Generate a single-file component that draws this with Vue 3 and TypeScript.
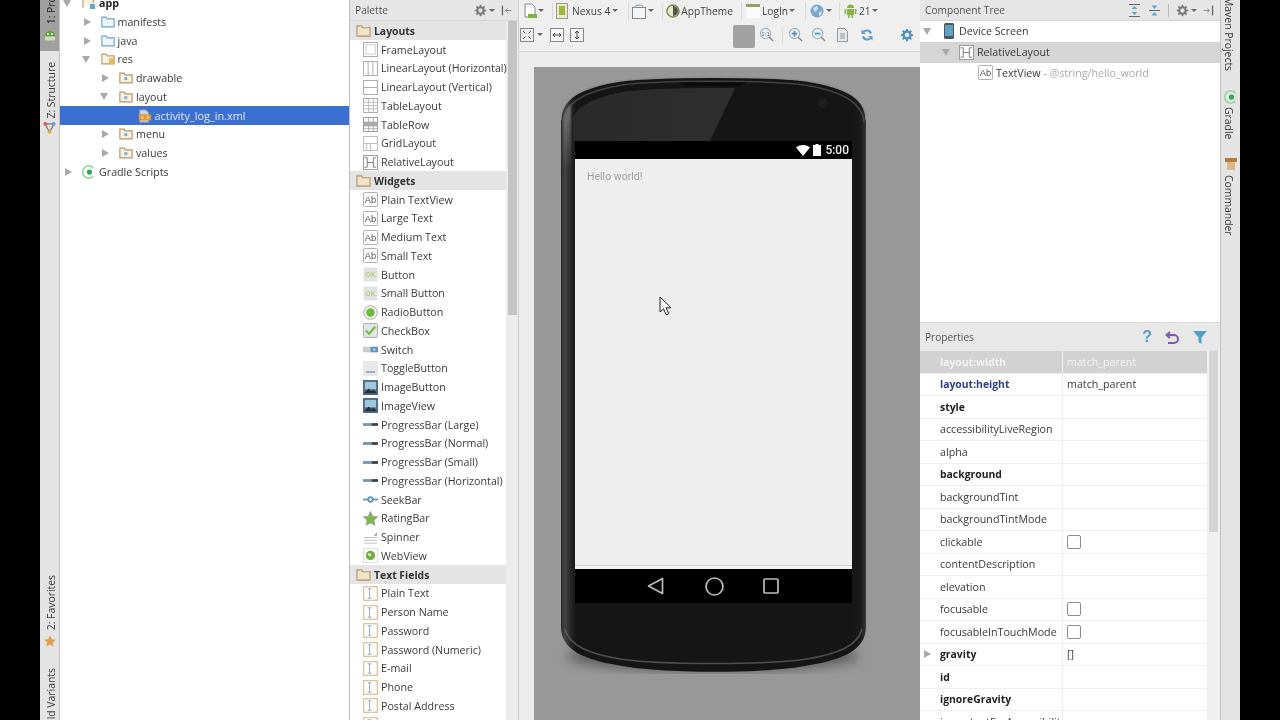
<script setup lang="ts">
type Row = { label: string; icon: string; head?: boolean }

const treeRows = [
  { label: "app", icon: "module", level: 0, open: true, bold: true },
  { label: "manifests", icon: "folder-blue", level: 1, open: false },
  { label: "java", icon: "folder-blue", level: 1, open: false },
  { label: "res", icon: "folder-res", level: 1, open: true },
  { label: "drawable", icon: "folder-pkg", level: 2, open: false },
  { label: "layout", icon: "folder-pkg", level: 2, open: true },
  { label: "activity_log_in.xml", icon: "xml", level: 3, selected: true },
  { label: "menu", icon: "folder-pkg", level: 2, open: false },
  { label: "values", icon: "folder-pkg", level: 2, open: false },
  { label: "Gradle Scripts", icon: "gradle", level: 0, open: false },
]

const paletteRows: Row[] = [
  { label: "Layouts", icon: "folder", head: true },
  { label: "FrameLayout", icon: "frame" },
  { label: "LinearLayout (Horizontal)", icon: "linh" },
  { label: "LinearLayout (Vertical)", icon: "linv" },
  { label: "TableLayout", icon: "table" },
  { label: "TableRow", icon: "tablerow" },
  { label: "GridLayout", icon: "grid" },
  { label: "RelativeLayout", icon: "relative" },
  { label: "Widgets", icon: "folder", head: true },
  { label: "Plain TextView", icon: "ab" },
  { label: "Large Text", icon: "ab" },
  { label: "Medium Text", icon: "ab" },
  { label: "Small Text", icon: "ab" },
  { label: "Button", icon: "ok" },
  { label: "Small Button", icon: "ok" },
  { label: "RadioButton", icon: "radio" },
  { label: "CheckBox", icon: "check" },
  { label: "Switch", icon: "switch" },
  { label: "ToggleButton", icon: "toggle" },
  { label: "ImageButton", icon: "image" },
  { label: "ImageView", icon: "image" },
  { label: "ProgressBar (Large)", icon: "bar" },
  { label: "ProgressBar (Normal)", icon: "bar" },
  { label: "ProgressBar (Small)", icon: "bar" },
  { label: "ProgressBar (Horizontal)", icon: "bar" },
  { label: "SeekBar", icon: "seek" },
  { label: "RatingBar", icon: "star" },
  { label: "Spinner", icon: "spinner" },
  { label: "WebView", icon: "web" },
  { label: "Text Fields", icon: "folder", head: true },
  { label: "Plain Text", icon: "field" },
  { label: "Person Name", icon: "field" },
  { label: "Password", icon: "field" },
  { label: "Password (Numeric)", icon: "field" },
  { label: "E-mail", icon: "field" },
  { label: "Phone", icon: "field" },
  { label: "Postal Address", icon: "field" },
  { label: "Multiline Text", icon: "field" },
]

const props = [
  { name: "layout:width", value: "match_parent", kind: "selected" },
  { name: "layout:height", value: "match_parent", kind: "blue" },
  { name: "style", kind: "strong" },
  { name: "accessibilityLiveRegion" },
  { name: "alpha" },
  { name: "background", kind: "strong" },
  { name: "backgroundTint" },
  { name: "backgroundTintMode" },
  { name: "clickable", check: true },
  { name: "contentDescription" },
  { name: "elevation" },
  { name: "focusable", check: true },
  { name: "focusableInTouchMode", check: true },
  { name: "gravity", value: "[]", kind: "strong", arrow: true },
  { name: "id", kind: "strong" },
  { name: "ignoreGravity", kind: "strong" },
  { name: "importantForAccessibility" },
]
</script>

<template>
  <div class="screen-root">
    <svg class="defs" width="0" height="0">
      <defs>
        <symbol id="folder" viewBox="0 0 16 16"><path d="M1 3h5l1 2h8v9H1z" fill="#f0e3c8" stroke="#b09468" stroke-width="1.2" /></symbol>
        <symbol id="folder-blue" viewBox="0 0 16 16"><path d="M1 2.500h5l1 2h8v9H1z" fill="#eef6fa" stroke="#6aa5c4" stroke-width="1.3" /></symbol>
        <symbol id="folder-res" viewBox="0 0 16 16"><path d="M1 2.500h5l1 2h8v9H1z" fill="#f8f2e4" stroke="#b89c6c" stroke-width="1.3" /><rect x="9" y="7" width="6" height="7" fill="#e2bd58" /></symbol>
        <symbol id="folder-pkg" viewBox="0 0 16 16"><path d="M1 2.500h5l1 2h8v9H1z" fill="#f8f2e4" stroke="#b09468" stroke-width="1.3" /><rect x="6" y="7" width="3.500" height="3.500" fill="#7fb2cf" /></symbol>
        <symbol id="module" viewBox="0 0 16 16"><path d="M1 13V2h5l1 2h6v4" fill="#f8f2e4" stroke="#b89c6c" stroke-width="1.3" /><rect x="9" y="9" width="6" height="6" fill="#6aa5c9" /></symbol>
        <symbol id="xml" viewBox="0 0 16 16"><path d="M2 1h7l3 3v11H2z" fill="#ccd3e4" stroke="#8d9ab6" /><rect x="1" y="6" width="14" height="7" rx="1" fill="#e29a32" /><path d="M6 8l-2 1.500 2 1.500M10 8l2 1.500-2 1.500" fill="none" stroke="#fff" /></symbol>
        <symbol id="gradle" viewBox="0 0 16 16"><path d="M13 3.500A7 7 0 1 0 13 12.500" fill="none" stroke="#9cd6a2" stroke-width="2" /><circle cx="8.500" cy="8" r="3" fill="#2fa84f" /></symbol>
        <symbol id="frame" viewBox="0 0 16 16"><rect x=".5" y=".5" width="15" height="15" fill="#fff" stroke="#aaa" /><rect x="3" y="3" width="10" height="10" fill="none" stroke="#ccc" /></symbol>
        <symbol id="linh" viewBox="0 0 16 16"><rect x=".5" y=".5" width="15" height="15" fill="#fff" stroke="#aaa" /><path d="M5.500 1v14M10.500 1v14" stroke="#aaa" /></symbol>
        <symbol id="linv" viewBox="0 0 16 16"><rect x=".5" y=".5" width="15" height="15" fill="#fff" stroke="#aaa" /><path d="M1 8h14" stroke="#aaa" /></symbol>
        <symbol id="table" viewBox="0 0 16 16"><rect x=".5" y=".5" width="15" height="15" fill="#fff" stroke="#aaa" /><path d="M1 4.500h14M1 8h14M1 11.500h14M6 1v14M11 1v14" stroke="#bbb" /></symbol>
        <symbol id="tablerow" viewBox="0 0 16 16"><rect x=".5" y=".5" width="15" height="15" fill="#fff" stroke="#999" /><rect x="1" y="5" width="14" height="5" fill="#aaa" /><path d="M1 12.500h14M6 1v14M11 1v14" stroke="#aaa" /></symbol>
        <symbol id="grid" viewBox="0 0 16 16"><rect x=".5" y=".5" width="15" height="15" fill="#fff" stroke="#bbb" /><path d="M1 8h14M8 8v7M4 8v7" stroke="#bbb" /></symbol>
        <symbol id="relative" viewBox="0 0 16 16"><rect x=".5" y=".5" width="15" height="15" fill="#fff" stroke="#999" /><path d="M1.500 3h3v10h-3M14 3h-3v10h3M4.500 8H11" fill="none" stroke="#777" /></symbol>
        <symbol id="ab" viewBox="0 0 16 16"><rect x=".5" y=".5" width="15" height="15" rx="1" fill="#fff" stroke="#aaa" /><text x="8" y="11.500" text-anchor="middle" font-size="10" font-family="Liberation Sans" fill="#555">Ab</text></symbol>
        <symbol id="ok" viewBox="0 0 16 16"><rect x=".5" y=".5" width="15" height="15" rx="1" fill="#e2e2e2" /><text x="8" y="11" text-anchor="middle" font-size="7.500" font-weight="700" font-family="Liberation Sans" fill="#b4d080">OK</text></symbol>
        <symbol id="radio" viewBox="0 0 16 16"><circle cx="8" cy="8" r="7.300" fill="#eee" stroke="#aaa" /><circle cx="8" cy="8" r="4.500" fill="#6dbb3a" /></symbol>
        <symbol id="check" viewBox="0 0 16 16"><rect x=".5" y=".5" width="15" height="15" rx="1" fill="#e4e4e4" stroke="#aaa" /><path d="M3 8l3.500 3.500L13 4" fill="none" stroke="#6dbb3a" stroke-width="2.200" /></symbol>
        <symbol id="switch" viewBox="0 0 16 16"><rect y="5" width="10" height="6" fill="#ccc" /><rect x="8" y="5" width="8" height="6" fill="#5f95c4" /><rect x="11" y="7" width="2" height="2" fill="#dfeaf3" /></symbol>
        <symbol id="toggle" viewBox="0 0 16 16"><rect width="16" height="16" fill="#e8e8e8" /><rect x="3" y="11" width="10" height="1.500" fill="#7a95b0" /></symbol>
        <symbol id="image" viewBox="0 0 16 16"><rect width="16" height="16" fill="#4e6a86" /><rect x="2" y="2" width="12" height="8" fill="#9fc7e0" /><path d="M1 14l5-5 3 3 2-2 4 4z" fill="#26323c" /></symbol>
        <symbol id="bar" viewBox="0 0 16 16"><rect y="6.500" width="9" height="3" fill="#7096b8" /><rect x="9" y="6.500" width="7" height="3" fill="#444" /></symbol>
        <symbol id="seek" viewBox="0 0 16 16"><rect y="7" width="16" height="2" fill="#7096b8" /><circle cx="8" cy="8" r="3.500" fill="#6a98bd" /><circle cx="8" cy="8" r="1.300" fill="#fff" /></symbol>
        <symbol id="star" viewBox="0 0 16 16"><path d="M8 .5l2.300 5 5.400.7-4 3.700 1.100 5.400L8 12.700l-4.800 2.600 1.100-5.400-4-3.700 5.400-.7z" fill="#79b84a" stroke="#a6a6a6" /></symbol>
        <symbol id="spinner" viewBox="0 0 16 16"><path d="M1 8h14M1 11h14M1 14h14" stroke="#bbb" /><path d="M15 2v4h-4z" fill="#aaa" /></symbol>
        <symbol id="web" viewBox="0 0 16 16"><rect x=".5" y=".5" width="15" height="15" fill="#fff" stroke="#ddd" /><circle cx="8" cy="8" r="5" fill="#6fae3e" /><circle cx="7" cy="7" r="1.800" fill="#d6e8c2" /></symbol>
        <symbol id="field" viewBox="0 0 16 16"><rect x=".7" y=".7" width="14.600" height="14.600" fill="#fff" stroke="#e0c49c" stroke-width="1.400" /><path d="M5 3h4M5 13h4M7 3v10" fill="none" stroke="#8fa8c0" /></symbol>
        <symbol id="gear" viewBox="0 0 16 16"><circle cx="8" cy="8" r="4" fill="none" stroke="currentColor" stroke-width="2.600" /><path d="M8 1v3M8 12v3M1 8h3M12 8h3M3 3l2 2M11 11l2 2M13 3l-2 2M5 11l-2 2" stroke="currentColor" stroke-width="2" /></symbol>
        <symbol id="pin" viewBox="0 0 16 16"><path d="M3 2v12" stroke="#666" stroke-width="1.600" /><path d="M14 8H7M9.500 5.500L7 8l2.500 2.500" fill="none" stroke="#777" /></symbol>
        <symbol id="pin-r" viewBox="0 0 16 16"><path d="M13 2v12" stroke="#666" stroke-width="1.600" /><path d="M2 8h7M6.500 5.500L9 8l-2.500 2.500" fill="none" stroke="#777" /></symbol>
        <symbol id="magnify" viewBox="0 0 16 16"><circle cx="7" cy="7" r="5.500" fill="#e7eef2" stroke="#9fb1bd" stroke-width="1.200" /><path d="M11 11l4 4" stroke="#8a8a8a" stroke-width="1.500" /></symbol>
      </defs>
    </svg>

    <div class="bar-black"></div>

    <aside class="stripe stripe-left">
      <div class="stripe-active">
        <span class="vtext up project">1: Project</span>
        <svg class="stripe-icon droid" width="12" height="11" viewBox="0 0 12 11"><path d="M1 6a5 5 0 0 1 10 0z" fill="#5f9e3a" /><rect x="1" y="6.500" width="10" height="4" rx="1" fill="#cfe0b8" /><circle cx="4" cy="4" r=".9" fill="#fff" /><circle cx="8" cy="4" r=".9" fill="#fff" /></svg>
      </div>
      <span class="vtext up structure">Z: Structure</span>
      <svg class="stripe-icon tree-glyph" width="13" height="13" viewBox="0 0 14 14"><path d="M2 3l5 9 5-9z" fill="none" stroke="#777" stroke-width="1.300" /><circle cx="2.500" cy="3" r="2" fill="#d9534f" /><circle cx="11.500" cy="3" r="2" fill="#5a9bd4" /><circle cx="7" cy="11.500" r="2" fill="#e6a13c" /></svg>
      <div class="grow"></div>
      <span class="vtext up">2: Favorites</span>
      <svg class="stripe-icon star" width="12" height="12" viewBox="0 0 16 16"><path d="M8 .5l2.300 5 5.400.7-4 3.700 1.100 5.400L8 12.700l-4.800 2.600 1.100-5.400-4-3.700 5.400-.7z" fill="#e0a04a" /></svg>
      <span class="vtext up variants">Build Variants</span>
    </aside>

    <section class="tree">
      <div
        v-for="row in treeRows"
        :key="row.label"
        class="tree-row"
        :class="{ 'tree-selected': row.selected }"
        :style="{ paddingLeft: 3 + row.level * 18.500 + 'px' }"
      >
        <span class="arrow-slot">
          <i v-if="row.open === true" class="tri-down"></i>
          <i v-else-if="row.open === false" class="tri-right"></i>
        </span>
        <svg class="tree-icon" width="14" height="14"><use :href="'#' + row.icon" /></svg>
        <span :class="{ bold: row.bold }">{{ row.label }}</span>
      </div>
    </section>

    <section class="palette">
      <header class="panel-head">
        <span>Palette</span>
        <span class="head-tools">
          <svg class="gear" width="13" height="13"><use href="#gear" /></svg>
          <i class="mini-down"></i>
          <svg class="pin-gap" width="13" height="13"><use href="#pin" /></svg>
        </span>
      </header>
      <div class="palette-body">
        <div class="palette-list">
          <template v-for="row in paletteRows" :key="row.label">
            <div v-if="row.head" class="pal-head">
              <svg width="15" height="15"><use :href="'#' + row.icon" /></svg>
              <span>{{ row.label }}</span>
            </div>
            <div v-else class="pal-row">
              <svg width="15" height="15"><use :href="'#' + row.icon" /></svg>
              <span>{{ row.label }}</span>
            </div>
          </template>
        </div>
        <div class="pal-track"><div class="pal-thumb"></div></div>
      </div>
    </section>

    <section class="designer">
      <div class="toolbar">
        <div class="tb-row tb-top">
          <svg width="15" height="16" viewBox="0 0 15 16"><path d="M2 1h7l3 3v10H2z" fill="#fff" stroke="#888" /><rect x="5" y="11" width="9" height="4" fill="#7cb342" /></svg>
          <i class="mini-down m0"></i>
          <b class="tb-div d1"></b>
          <svg width="12" height="16" viewBox="0 0 12 16"><rect x=".5" y=".5" width="11" height="15" fill="#f0e8c8" stroke="#999" /><rect x="3" y="3" width="6" height="9" fill="#9ab83e" /></svg>
          <span class="tb-text t-nexus">Nexus 4</span><i class="mini-down m2"></i>
          <b class="tb-div d2"></b>
          <svg width="14" height="16" viewBox="0 0 14 16"><rect x=".5" y="4.500" width="13" height="11" fill="#f4f4f4" stroke="#888" /><path d="M2 5C3 1 11 1 12 5" fill="none" stroke="#6f9fc0" /></svg>
          <i class="mini-down m2"></i>
          <b class="tb-div d3"></b>
          <svg width="14" height="14" viewBox="0 0 14 14"><circle cx="7" cy="7" r="6" fill="#e6e8c8" stroke="#7d8b4a" stroke-width="1.500" /><path d="M7 2a5 5 0 0 1 0 10z" fill="#555" /></svg>
          <span class="tb-text t-theme">AppTheme</span>
          <b class="tb-div d4"></b>
          <svg width="14" height="16" viewBox="0 0 14 16"><rect y="1" width="14" height="3" fill="#8fa35a" /><rect y="4" width="14" height="11" fill="#fafafa" /></svg>
          <span class="tb-text t-login">LogIn</span><i class="mini-down m1"></i>
          <b class="tb-div d5"></b>
          <svg class="globe" width="14" height="14" viewBox="0 0 14 14"><circle cx="7" cy="7" r="6.500" fill="#7ba7cf" /><path d="M3 4l4-2 1 3-3 3zM9 8l3-1-1 4-2 1z" fill="#d5e2ee" /></svg>
          <i class="mini-down m2"></i>
          <b class="tb-div d6"></b>
          <svg width="13" height="16" viewBox="0 0 12 16"><path d="M2.500 5a3.500 3.500 0 0 1 7 0zM2.500 6h7v6h-1v3h-1.500v-3h-2v3H3.500v-3h-1zM0 6h1.700v5H0zM10.300 6H12v5h-1.700z" fill="#8ab04a" /></svg>
          <span class="tb-text t-api">21</span><i class="mini-down m1"></i>
        </div>
        <div class="tb-row tb-bottom">
          <svg width="14" height="14" viewBox="0 0 14 14"><rect x=".5" y=".5" width="13" height="13" fill="#eee" stroke="#888" /><path d="M3 3l2.500 2.500M11 3L8.500 5.500M3 11l2.500-2.500M11 11L8.500 8.500" stroke="#555" /></svg>
          <i class="mini-down m3"></i>
          <svg class="fit1" width="14" height="14" viewBox="0 0 14 14"><rect x=".5" y=".5" width="13" height="13" fill="#f5f5f5" stroke="#888" /><path d="M3 7h8M5 5L3 7l2 2M9 5l2 2-2 2" fill="none" stroke="#444" /></svg>
          <svg class="fit2" width="14" height="14" viewBox="0 0 14 14"><rect x=".5" y=".5" width="13" height="13" fill="#f5f5f5" stroke="#888" /><path d="M7 3v8M5 5l2-2 2 2M5 9l2 2 2-2" fill="none" stroke="#444" /></svg>
          <div class="grow"></div>
          <span class="toggled"></span>
          <span class="zoom-one">
            <svg width="15" height="15" viewBox="0 0 16 16"><use href="#magnify" /><text x="7" y="9.500" text-anchor="middle" font-size="6.500" font-family="Liberation Sans" fill="#667">1:1</text></svg>
          </span>
          <b class="tb-div d7"></b>
          <svg class="zoom-in" width="15" height="15" viewBox="0 0 16 16"><use href="#magnify" /><path d="M4 7h6M7 4v6" stroke="#5d8fb0" stroke-width="1.800" /></svg>
          <svg class="zoom-out" width="15" height="15" viewBox="0 0 16 16"><use href="#magnify" /><path d="M4 7h6" stroke="#5d8fb0" stroke-width="1.800" /></svg>
          <svg class="doc" width="11" height="14" viewBox="0 0 11 14"><path d="M.5.5h7l3 3v10H.500z" fill="#e8e8e8" stroke="#8e9ba4" /><path d="M3 6h5M3 8h5M3 10h5" stroke="#8e9ba4" /></svg>
          <svg class="refresh" width="14" height="14" viewBox="0 0 14 14"><path d="M12 5A5.500 5.500 0 0 0 3 3L1.500 1.500V6H6L4.300 4.300A3.500 3.500 0 0 1 10 6zM2 9a5.500 5.500 0 0 0 9 2l1.500 1.500V8H8l1.700 1.700A3.500 3.500 0 0 1 4 8z" fill="#5a9bd0" /></svg>
          <svg class="gear-blue" width="14" height="14"><use href="#gear" /></svg>
        </div>
      </div>
      <div class="canvas">
        <div class="phone">
          <svg class="bezel" width="307" height="600" viewBox="0 0 307 600">
            <defs>
              <linearGradient id="edge" x1="0" y1="0" x2="1" y2="0">
                <stop offset="0" stop-color="#2a2a2a" />
                <stop offset=".012" stop-color="#444" />
                <stop offset=".035" stop-color="#232323" />
                <stop offset=".05" stop-color="#151515" />
                <stop offset=".95" stop-color="#151515" />
                <stop offset=".985" stop-color="#1c1c1c" />
                <stop offset="1" stop-color="#3a3a3a" />
              </linearGradient>
              <linearGradient id="glare" x1="0" y1="0" x2="1" y2="0">
                <stop offset="0" stop-color="#2a2a2a" />
                <stop offset="1" stop-color="#2e2e2e" />
              </linearGradient>
              <linearGradient id="side" x1="0" y1="0" x2="0" y2="1">
                <stop offset="0" stop-color="#888" stop-opacity=".75" />
                <stop offset="1" stop-color="#888" stop-opacity="0" />
              </linearGradient>
              <filter id="soft"><feGaussianBlur stdDeviation="6" /></filter>
              <filter id="soft-small"><feGaussianBlur stdDeviation="1.200" /></filter>
            </defs>
            <ellipse cx="153" cy="580" rx="146" ry="15" fill="#5a5a5a" filter="url(#soft)" />
            <path d="M1 44C1 22 22 11 60 5C100 0 207 0 247 5C285 11 306 22 306 44L306 551C306 575 280 584 250 589C210 598 97 598 57 589C27 584 1 575 1 551Z" fill="url(#edge)" />
            <path d="M1 44C1 22 22 11 60 5C100 0 207 0 247 5C285 11 306 22 306 44" fill="none" stroke="#8e8e8e" stroke-width="1.300" />
            <path d="M3 46C5 26 26 15 62 9C100 4 207 4 245 9C281 15 302 26 304 46" fill="none" stroke="#555" stroke-width="1.500" opacity=".7" />
            <path d="M13 65V42C17 30 34 22 62 16C90 12 140 12 175 12L150 65Z" fill="url(#glare)" />
            <path d="M3 48C4 38 7 32 11 29V95H3Z" fill="url(#side)" filter="url(#soft-small)" />
            <path d="M120 6.500H187L180 10H127Z" fill="#0a0a0a" />
            <circle cx="263" cy="27" r="5" fill="#1d1d1d" />
            <path d="M5 553C9 570 30 578 60 583C100 589 207 589 247 583C277 578 298 570 302 553" fill="none" stroke="#666" stroke-width="1.500" opacity=".7" />
          </svg>
          <div class="device">
            <div class="status">
              <svg width="14" height="11" viewBox="0 0 14 11"><path d="M0 2.500C4-.8 10-.8 14 2.500L7 11z" fill="#fff" /></svg>
              <svg width="8" height="12" viewBox="0 0 8 12"><path d="M2.500 0h3v1H8v11H0V1h2.500z" fill="#fff" /></svg>
              <span class="clock">5:00</span>
            </div>
            <div class="content"><span class="hello">Hello world!</span></div>
            <div class="navbar">
              <svg class="nav-back" width="17" height="18" viewBox="0 0 17 18"><path d="M15.500 1.500v15L1.500 9z" fill="none" stroke="#bbb" stroke-width="1.700" stroke-linejoin="round" /></svg>
              <svg width="19" height="19" viewBox="0 0 19 19"><circle cx="9.500" cy="9.500" r="8.500" fill="none" stroke="#bbb" stroke-width="1.700" /></svg>
              <svg width="16" height="16" viewBox="0 0 16 16"><rect x="1" y="1" width="14" height="14" rx="1" fill="none" stroke="#bbb" stroke-width="1.700" /></svg>
            </div>
          </div>
          <svg class="cursor" width="13" height="20" viewBox="0 0 13 20"><path d="M1 1v15l3.500-3.200 2.700 6 2.600-1.200-2.700-5.800H12z" fill="#fff" stroke="#222" /></svg>
        </div>
      </div>
    </section>

    <section class="right-col">
      <div class="comp-tree">
        <header class="panel-head">
          <span>Component Tree</span>
          <span class="head-tools">
            <svg width="13" height="13" viewBox="0 0 13 13"><path d="M1 .5h11M1 12.500h11" stroke="#666" /><path d="M6.500 2L3.500 5h6zM6.500 11l-3-3h6z" fill="#5aa7d0" /></svg>
            <svg class="collapse" width="13" height="13" viewBox="0 0 13 13"><path d="M1 6.500h11" stroke="#666" /><path d="M6.500 5l-3-3.500h6zM6.500 8l-3 3.500h6z" fill="#5aa7d0" /></svg>
            <b class="head-div"></b>
            <svg class="gear" width="13" height="13"><use href="#gear" /></svg>
            <i class="mini-down"></i>
            <svg class="pin-gap" width="13" height="13"><use href="#pin-r" /></svg>
          </span>
        </header>
        <div class="ct-row l0">
          <i class="tri-down"></i>
          <svg width="10" height="16" viewBox="0 0 10 16"><rect width="10" height="16" rx="1.500" fill="#555" /><rect x="1" y="2" width="8" height="11" fill="#5ba1c4" /></svg>
          <span>Device Screen</span>
        </div>
        <div class="ct-row l1 ct-selected">
          <i class="tri-down"></i>
          <svg width="15" height="15"><use href="#relative" /></svg>
          <span>RelativeLayout</span>
        </div>
        <div class="ct-row l2">
          <svg width="15" height="15"><use href="#ab" /></svg>
          <span>TextView <em>- @string/hello_world</em></span>
        </div>
      </div>
      <div class="props">
        <header class="props-head">
          <span>Properties</span>
          <span class="props-tools">
            <span class="q">?</span>
            <svg width="15" height="13" viewBox="0 0 15 13"><path d="M5 1L1.500 4 5 7M2 4h7a4 4 0 0 1 0 8H3" fill="none" stroke="#7c5cae" stroke-width="2" /></svg>
            <svg width="14" height="13" viewBox="0 0 14 13"><path d="M0 0h14L8.500 6.500V13l-3-2V6.500z" fill="#4f9fc9" /></svg>
          </span>
        </header>
        <div class="props-body">
          <div class="props-table">
            <div
              v-for="p in props"
              :key="p.name"
              class="prop-row"
              :class="p.kind"
            >
              <div class="prop-name">
                <i v-if="p.arrow" class="tri-right prop-arrow"></i>
                {{ p.name }}
              </div>
              <div class="prop-value">
                <span v-if="p.check" class="checkbox"></span>
                <template v-else>{{ p.value }}</template>
              </div>
            </div>
          </div>
          <div class="prop-track"><div class="prop-thumb"></div></div>
        </div>
      </div>
    </section>

    <aside class="stripe stripe-right">
      <span class="vtext maven">Maven Projects</span>
      <svg class="stripe-icon gradle-icon" width="14" height="14"><use href="#gradle" /></svg>
      <span class="vtext gradle-text">Gradle</span>
      <svg class="stripe-icon commander-icon" width="14" height="14" viewBox="0 0 14 14"><path d="M1 1h12v4H1z" fill="#b5793c" /><rect x="3" y="5" width="8" height="8" fill="#d8b98a" /></svg>
      <span class="vtext commander-text">Commander</span>
    </aside>

    <div class="bar-black"></div>
  </div>
</template>

<style>
html,
body {
  margin: 0;
  background: #000;
}
</style>

<style scoped>
.screen-root {
  display: grid;
  grid-template-columns: 40px 20px 290px 169px 401px 300px 20px 40px;
  width: 1280px;
  height: 720px;
  overflow: hidden;
  background: #000;
  color: #3a3a3a;
  font-family: "Open Sans", "Noto Sans", sans-serif;
  font-size: 10.7px;
  filter: blur(0.4px);
}
.defs {
  position: absolute;
}
.bar-black {
  background: #000;
}
.grow {
  flex: 1;
}
.bold {
  font-weight: 700;
  color: #222;
}
svg {
  flex: none;
}

/* side stripes */
.stripe {
  display: flex;
  flex-direction: column;
  align-items: center;
  height: 720px;
  overflow: hidden;
  background: #e4e4e4;
  box-sizing: border-box;
}
.stripe-left {
  border-right: 1px solid #c2c2c2;
}
.stripe-right {
  border-left: 1px solid #c2c2c2;
}
.vtext {
  writing-mode: vertical-rl;
  white-space: nowrap;
  font-size: 10.4px;
  line-height: 14px;
  flex: none;
}
.vtext.up {
  transform: rotate(180deg);
  margin-left: 3px;
}
.stripe-active {
  display: flex;
  flex-direction: column;
  align-items: center;
  justify-content: flex-end;
  width: 100%;
  height: 51px;
  background: #a0a0a0;
  padding-bottom: 10px;
  box-sizing: border-box;
  overflow: hidden;
}
.stripe-active .vtext {
  color: #222;
}
.stripe-icon {
  margin-top: 4px;
}
.droid {
  margin-top: 6px;
}
.structure {
  margin-top: 11px;
}
.tree-glyph {
  margin-top: 2px;
}
.star {
  margin-top: 5px;
}
.variants {
  margin-top: 21px;
  margin-bottom: -15px;
}
.maven {
  margin-top: -3px;
}
.stripe-right .vtext {
  margin-right: 3px;
}
.gradle-icon {
  margin-top: 19px;
}
.gradle-text {
  margin-top: 3px;
}
.commander-icon {
  margin-top: 18px;
}
.commander-text {
  margin-top: 4px;
}

/* project tree */
.tree {
  background: #fff;
  padding-top: 0;
  overflow: hidden;
  border-right: 1px solid #bdbdbd;
  box-sizing: border-box;
}
.tree-row {
  display: flex;
  align-items: center;
  height: 18.75px;
  box-sizing: border-box;
  white-space: nowrap;
}
.tree-row:first-child {
  margin-top: -6.25px;
}
.tree-selected {
  background: #3b6fd2;
  color: #e2e9f6;
}
.tree-selected span {
  font-size: 10.9px;
}
.arrow-slot {
  display: flex;
  align-items: center;
  width: 19px;
  flex: none;
}
.tree-icon {
  margin-right: 3px;
}
.tri-right {
  display: block;
  width: 0;
  height: 0;
  border-left: 7px solid #a9a9a9;
  border-top: 4.5px solid transparent;
  border-bottom: 4.5px solid transparent;
  margin-left: 2px;
}
.tri-down {
  display: block;
  width: 0;
  height: 0;
  border-top: 7px solid #a9a9a9;
  border-left: 4.5px solid transparent;
  border-right: 4.5px solid transparent;
}

/* panels */
.panel-head {
  display: flex;
  align-items: center;
  justify-content: space-between;
  height: 20px;
  padding: 0 5px;
  background: #e6e6e6;
  border-bottom: 1px solid #d4d4d4;
  font-size: 10.2px;
  color: #555;
}
.head-tools {
  display: flex;
  align-items: center;
  color: #777;
}
.mini-down {
  display: block;
  width: 0;
  height: 0;
  margin-left: 2px;
  border-top: 3px solid #666;
  border-left: 3px solid transparent;
  border-right: 3px solid transparent;
}
.pin-gap {
  margin-left: 5px;
}

/* palette */
.palette {
  background: #ececec;
  overflow: hidden;
  border-right: 1px solid #d0d0d0;
  box-sizing: border-box;
}
.palette-body {
  display: flex;
  padding-top: 0.4px;
}
.palette-list {
  width: 156px;
  background: #fff;
  flex: none;
}
.pal-head,
.pal-row {
  display: flex;
  align-items: center;
  height: 18.75px;
  white-space: nowrap;
}
.pal-head {
  gap: 3px;
  padding-left: 6px;
  background: #e4e4e4;
  font-size: 10.4px;
  font-weight: 700;
  color: #333;
}
.pal-row {
  gap: 3px;
  padding-left: 13px;
}
.pal-track {
  width: 9px;
  margin-left: 2px;
}
.pal-thumb {
  height: 294px;
  background: #c4c4c4;
}

/* designer */
.designer {
  display: flex;
  flex-direction: column;
  background: #ececec;
  overflow: hidden;
}
.toolbar {
  height: 52px;
  box-sizing: border-box;
  flex: none;
  background: #efefef;
  border-bottom: 1px solid #d2d2d2;
}
.tb-row {
  display: flex;
  align-items: center;
}
.tb-top {
  height: 21px;
  padding-left: 4px;
}
.tb-bottom {
  height: 27px;
  padding-left: 1px;
  padding-right: 6px;
}
.tb-text {
  font-size: 10.2px;
  color: #444;
}
.tb-div {
  display: block;
  width: 1px;
  height: 18px;
  background: #dadada;
}
.m0 {
  margin-left: 0;
}
.m1 {
  margin-left: 1px;
}
.m2 {
  margin-left: 2px;
}
.m3 {
  margin-left: 3px;
}
.d1 {
  margin: 0 3px 0 8px;
}
.d2 {
  margin: 0 3px 0 10px;
}
.d3 {
  margin: 0 3px 0 8px;
}
.d4 {
  margin: 0 4px 0 8px;
}
.d5 {
  margin: 0 4px 0 10px;
}
.d6 {
  margin: 0 4px 0 7px;
}
.d7 {
  margin: 0 5px 0 8px;
}
.t-nexus {
  margin-left: 4px;
}
.t-theme {
  margin-left: 1px;
}
.t-login {
  margin-left: 2px;
}
.t-api {
  margin-left: 2px;
}
.fit1 {
  margin-left: 7px;
}
.fit2 {
  margin-left: 6px;
}
.toggled {
  display: block;
  width: 22px;
  height: 23px;
  margin-top: 4px;
  background: #a2a2a2;
  border-radius: 2px;
}
.zoom-one {
  display: flex;
  margin-left: 4px;
}
.zoom-out {
  margin-left: 8px;
}
.doc {
  margin-left: 11px;
}
.refresh {
  margin-left: 12px;
}
.gear-blue {
  margin-left: 26px;
  color: #4b8fbf;
}

/* phone preview */
.canvas {
  margin: 15px 0 0 15px;
  flex: 1;
  padding: 9px 0 0 26px;
  background: #989898;
}
.phone {
  position: relative;
  width: 307px;
  height: 596px;
}
.bezel {
  position: absolute;
  left: 0;
  top: 0;
  overflow: visible;
}
.device {
  position: relative;
  display: flex;
  flex-direction: column;
  width: 277px;
  margin-left: 15px;
  padding-top: 65px;
}
.status {
  display: flex;
  align-items: center;
  justify-content: flex-end;
  gap: 3px;
  height: 18px;
  padding-right: 3px;
  background: #000;
}
.clock {
  margin-left: 1px;
  font-family: Roboto, sans-serif;
  font-size: 12px;
  font-weight: 500;
  color: #eee;
}
.content {
  height: 410px;
  box-sizing: border-box;
  padding: 10px 12px;
  background: #eee;
  border-bottom: 3px solid #f2f2f2;
  box-shadow: inset 0 -1px 0 0 #d2d2d2;
}
.hello {
  font-family: Roboto, sans-serif;
  font-size: 10.5px;
  color: #a0a0a0;
}
.navbar {
  display: flex;
  align-items: center;
  justify-content: center;
  gap: 39px;
  height: 34px;
  background: #000;
  padding-right: 2px;
  box-sizing: border-box;
}
.nav-back {
  margin-right: 2px;
}
.cursor {
  position: absolute;
  left: 99px;
  top: 220px;
}

/* right column */
.right-col {
  display: flex;
  flex-direction: column;
  height: 720px;
  overflow: hidden;
  background: #fff;
}
.comp-tree {
  height: 323px;
  flex: none;
  box-sizing: border-box;
  border-bottom: 1px solid #ddd;
}
.ct-row {
  display: flex;
  align-items: center;
  height: 20.75px;
  gap: 4px;
  white-space: nowrap;
}
.ct-row em {
  font-style: normal;
  color: #aaa;
}
.l0 {
  padding-left: 3px;
}
.l0 svg {
  margin-left: 9px;
  margin-right: 1px;
}
.l1 {
  padding-left: 22px;
}
.l1 svg {
  margin-left: 5px;
}
.l1 span {
  margin-left: -1px;
}
.l2 {
  padding-left: 58px;
  gap: 3px;
}
.ct-selected {
  background: #d5d5d5;
}
.collapse {
  margin-left: 7px;
}
.head-div {
  display: block;
  width: 1px;
  height: 13px;
  margin: 0 7px;
  background: #bbb;
}
.props {
  flex: 1;
  min-height: 0;
  display: flex;
  flex-direction: column;
}
.props-head {
  display: flex;
  align-items: center;
  justify-content: space-between;
  flex: none;
  height: 28px;
  padding: 0 13px 0 5px;
  background: #e8e8e8;
  font-size: 10.1px;
  color: #555;
}
.props-tools {
  display: flex;
  align-items: center;
  gap: 13px;
}
.q {
  font-family: "Liberation Sans", sans-serif;
  font-size: 16px;
  font-weight: 700;
  color: #5a9bc9;
  line-height: 14px;
}
.props-body {
  display: flex;
  flex: 1;
  min-height: 0;
  background: #f0f0f0;
}
.props-table {
  width: 287px;
  flex: none;
  background: #fff;
}
.prop-row {
  display: grid;
  grid-template-columns: 143px 144px;
  height: 22.5px;
  box-sizing: border-box;
  border-bottom: 1px solid #eee;
  white-space: nowrap;
}
.prop-name {
  position: relative;
  display: flex;
  align-items: center;
  padding-left: 20px;
  border-right: 1px solid #eee;
}
.prop-value {
  display: flex;
  align-items: center;
  padding-left: 4px;
}
.prop-arrow {
  position: absolute;
  left: 2px;
  top: 6px;
}
.prop-row.strong .prop-name,
.prop-row.blue .prop-name,
.prop-row.selected .prop-name {
  font-size: 10.4px;
  font-weight: 700;
}
.prop-row.strong .prop-name {
  color: #222;
}
.prop-row.blue .prop-name {
  color: #2c3f8c;
}
.prop-row.selected {
  background: #d2d2d2;
  color: #f2f2f2;
}
.checkbox {
  display: block;
  width: 12px;
  height: 12px;
  border: 1px solid #8a8a8a;
  border-radius: 2px;
}
.prop-track {
  width: 9px;
  margin-left: 2px;
}
.prop-thumb {
  height: 181px;
  background: #d4d4d4;
}
</style>
